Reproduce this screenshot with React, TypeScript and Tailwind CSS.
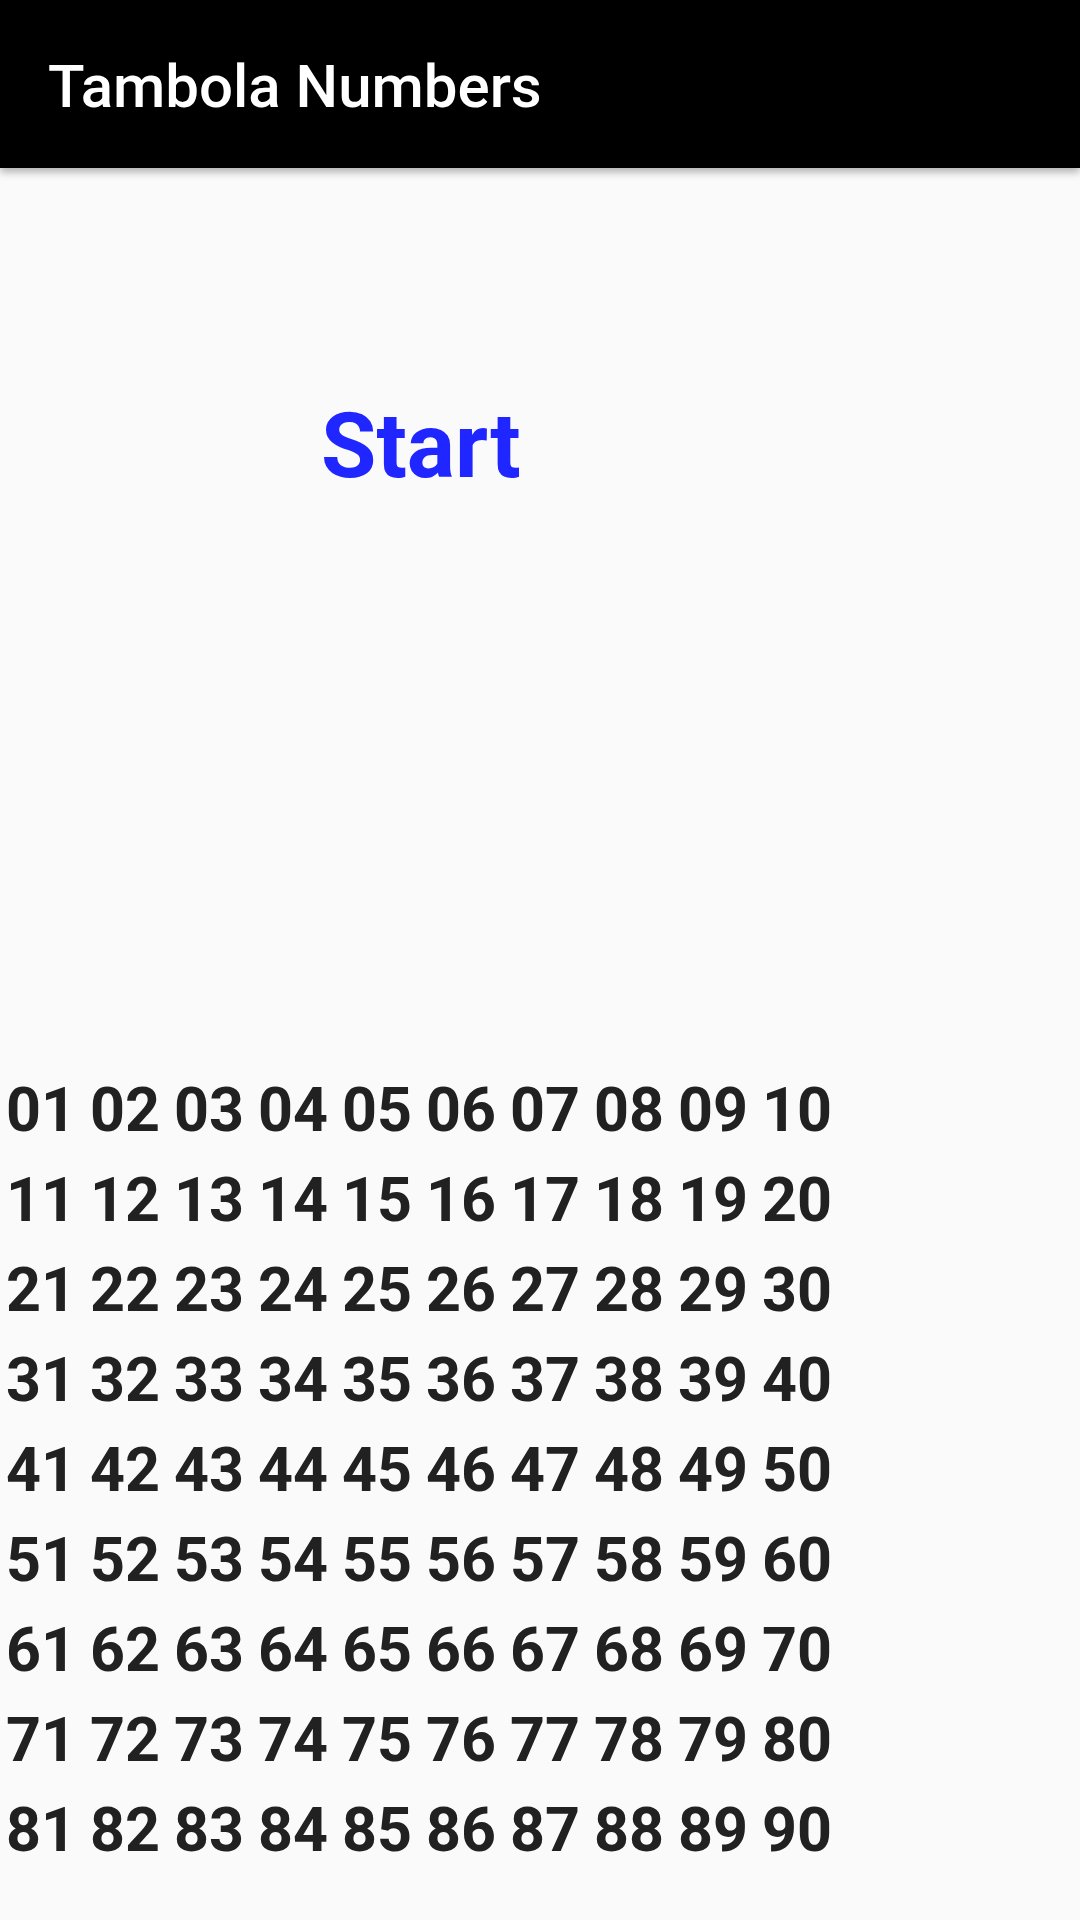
import React from 'react';

const rows: string[][] = Array.from({ length: 9 }, (_, r) =>
  Array.from({ length: 10 }, (_, c) => String(r * 10 + c + 1).padStart(2, '0'))
);

const App: React.FC = () => {
  return (
    <div className="min-h-[1920px] w-[1080px] bg-[#fafafa] font-['Roboto',sans-serif]">
      {/* toolbar */}
      <div className="relative z-10 flex h-[168px] items-center bg-black pl-[48px] pt-[5px] shadow-[0_4px_8px_rgba(0,0,0,0.3)]">
        <h1 className="text-[60px] font-medium leading-none text-white">Tambola Numbers</h1>
      </div>

      {/* start button */}
      <div className="pt-[234px] pl-[321px]">
        <button className="text-[90px] font-bold leading-none text-[#1f26ff]">Start</button>
      </div>

      {/* numbers board */}
      <div className="mt-[573px] pl-[6px]">
        {rows.map((row, i) => (
          <div key={i} className="flex h-[90px] items-center gap-[14px] text-[61px] font-bold leading-[90px] text-[#212121]">
            {row.map((n) => (
              <span key={n}>{n}</span>
            ))}
          </div>
        ))}
      </div>
    </div>
  );
};

export default App;
